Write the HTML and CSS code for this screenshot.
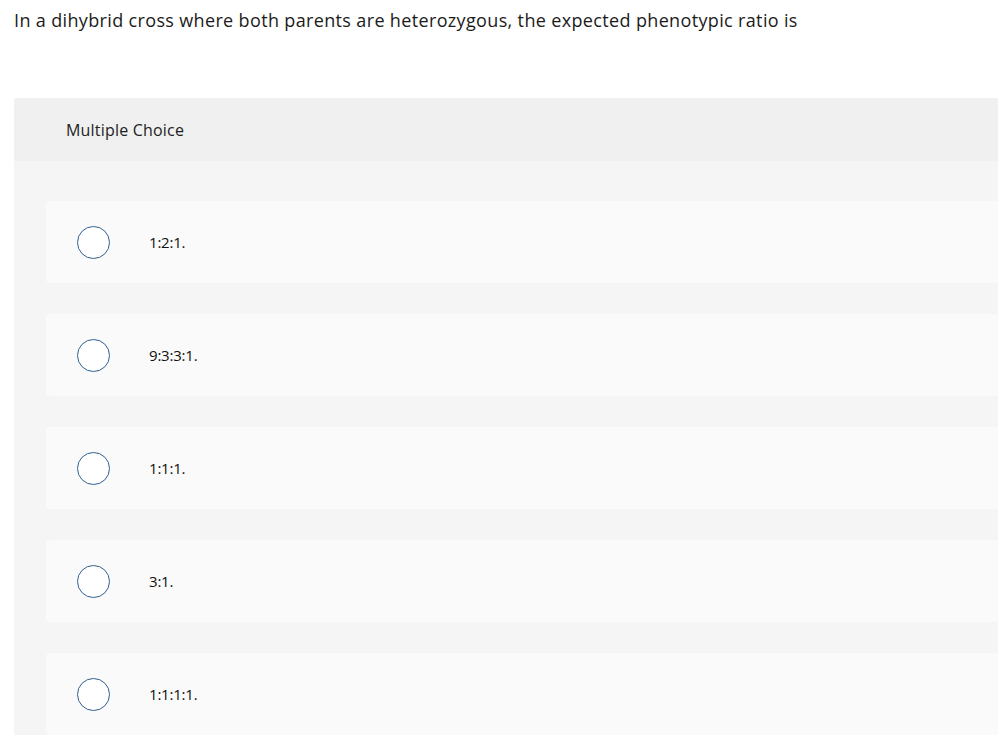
FILE: index.html
```html
<!DOCTYPE html>
<html>
<head>
<meta charset="utf-8">
<link rel="stylesheet" href="styles.css">
</head>
<body>
<div class="question">In a dihybrid cross where both parents are heterozygous, the expected phenotypic ratio is</div>
<div class="panel">
  <div class="panel-head">Multiple Choice</div>
  <div class="panel-body">
    <div class="option"><span class="radio"></span><span class="label">1:2:1.</span></div>
    <div class="option"><span class="radio"></span><span class="label">9:3:3:1.</span></div>
    <div class="option"><span class="radio"></span><span class="label">1:1:1.</span></div>
    <div class="option"><span class="radio"></span><span class="label">3:1.</span></div>
    <div class="option"><span class="radio"></span><span class="label">1:1:1:1.</span></div>
  </div>
</div>
</body>
</html>
```
FILE: styles.css
```css
html, body {
  margin: 0;
  padding: 0;
  background: #ffffff;
}
body {
  font-family: "Open Sans", "Lato", sans-serif;
  color: #1f1f1f;
  overflow: hidden;
}
.question {
  padding: 7px 0 0 14px;
  height: 98px;
  box-sizing: border-box;
  font-size: 18px;
  line-height: 26px;
  letter-spacing: 0.35px;
  color: #1b1b1b;
}
.panel {
  margin-left: 14px;
  border-top-left-radius: 3px;
  overflow: hidden;
}
.panel-head {
  background: #f0f0f0;
  height: 63px;
  display: flex;
  align-items: center;
  padding-left: 52px;
  font-size: 16px;
  letter-spacing: 0.2px;
  color: #222;
}
.panel-body {
  background: #f5f5f5;
  padding: 40px 0 0 32px;
  display: flex;
  flex-direction: column;
  gap: 31px;
}
.option {
  background: #fafafa;
  height: 82px;
  border-radius: 4px 0 0 4px;
  display: flex;
  align-items: center;
  padding-left: 31px;
}
.radio {
  width: 31px;
  height: 31px;
  border: 1.5px solid #2f5f8f;
  border-radius: 50%;
  background: #fff;
  flex: none;
}
.label {
  margin-left: 39px;
  font-size: 15px;
  color: #111;
  letter-spacing: -0.2px;
}
```
